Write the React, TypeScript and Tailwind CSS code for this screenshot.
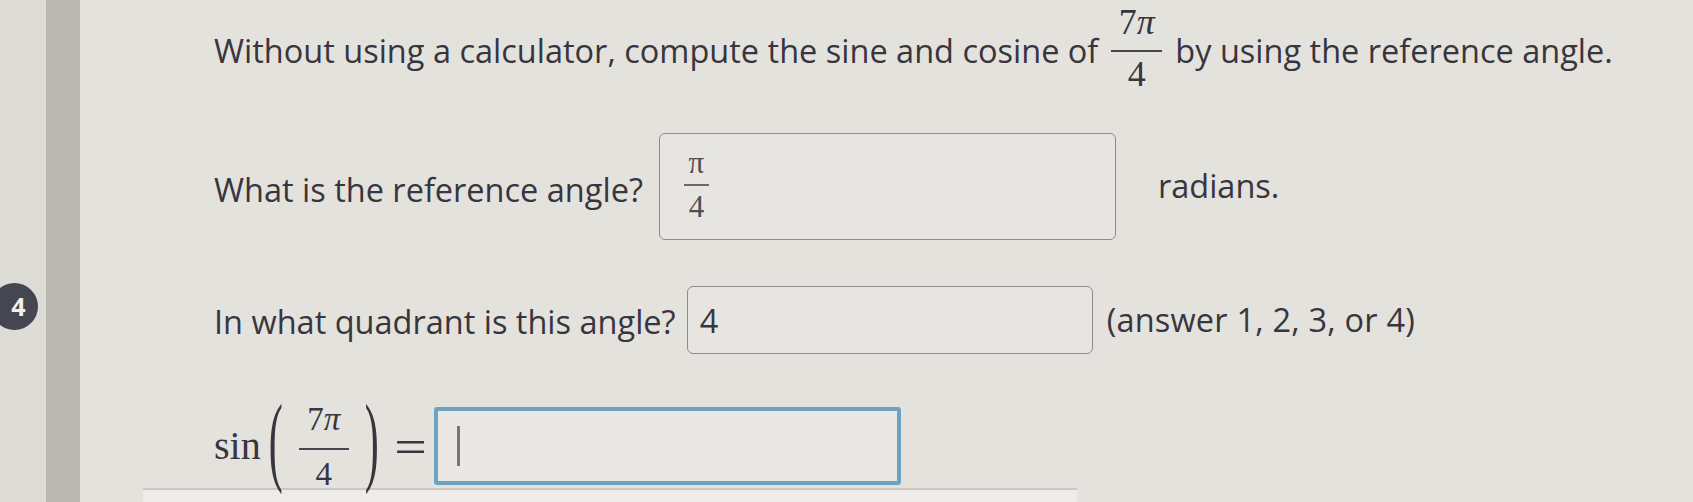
import React from "react";

const sans = "font-['Open_Sans',sans-serif] font-medium";
const serif = "font-['Liberation_Serif',serif]";

function Frac({
  num,
  den,
  className,
  barClass,
  numClass,
  denClass,
}: {
  num: React.ReactNode;
  den: React.ReactNode;
  className?: string;
  barClass?: string;
  numClass?: string;
  denClass?: string;
}) {
  return (
    <span className={`inline-flex flex-col items-center ${serif} ${className ?? ""}`}>
      <span className={`leading-none ${numClass ?? ""}`}>{num}</span>
      <span className={`w-full h-[2px] ${barClass ?? ""}`} />
      <span className={`leading-none ${denClass ?? ""}`}>{den}</span>
    </span>
  );
}

export default function App() {
  return (
    <div className="flex h-[502px] w-[1693px] overflow-hidden bg-[#e4e2dd] text-[#38353e]">
      {/* left gutter with question number */}
      <div className="w-[46px] shrink-0 bg-[#dedcd6]">
        <div className="mt-[283px] -ml-[9px] flex size-[47px] items-center justify-center rounded-full bg-[#45464f] font-['Open_Sans',sans-serif] text-[25px] font-bold text-[#f1f0ec]">
          <span className="ml-[8px]">4</span>
        </div>
      </div>
      <div className="w-[34px] shrink-0 bg-[#bab8b1]" />

      <div className="flex flex-1 flex-col pl-[63px]">
        <div className="flex flex-col pl-[71px]">
          {/* row 1 */}
          <div className={`mt-[13px] flex h-[74px] items-center text-[32.5px] ${sans}`}>
            <span className="mt-[2px]">
              Without using a calculator, compute the sine and cosine of
            </span>
            <Frac
              className="mx-[13px] -mt-[4px] w-[51px] text-[36px] font-normal"
              numClass="mb-[10px]"
              denClass="mt-[4px]"
              barClass="bg-[#4a4750]"
              num={
                <>
                  7<i>π</i>
                </>
              }
              den="4"
            />
            <span className="mt-[2px]">by using the reference angle.</span>
          </div>

          {/* row 2 */}
          <div className={`mt-[46px] flex h-[107px] items-center text-[32.5px] ${sans}`}>
            <span className="mt-[8px]">What is the reference angle?</span>
            <div className="ml-[16px] flex h-full w-[457px] items-center rounded-md border-[1.5px] border-[#8e8c8a] bg-[#e6e5e1] pl-[24px]">
              <Frac
                className="-mt-[4px] w-[25px] text-[31px] font-normal text-[#504d56]"
                numClass="mb-[6px]"
                denClass="mt-[5px]"
                barClass="bg-[#6a6770] h-[1.5px]"
                num="π"
                den="4"
              />
            </div>
            <span className="ml-[42px]">radians.</span>
          </div>

          {/* row 3 */}
          <div className={`mt-[46px] flex h-[68px] items-center text-[32.5px] ${sans}`}>
            <span className="mt-[4px]">In what quadrant is this angle?</span>
            <div className="ml-[11px] flex h-full w-[406px] items-center rounded-md border-[1.5px] border-[#8e8c8a] bg-[#e6e5e1] pl-[12px]">
              <span className="mt-[2px]">4</span>
            </div>
            <span className="ml-[14px] tracking-[0.2px]">(answer 1, 2, 3, or 4)</span>
          </div>

          {/* row 4 */}
          <div className={`mt-[53px] flex h-[78px] items-center ${serif}`}>
            <span className="text-[40px]">sin</span>
            <span className="ml-[8px] -mt-[12px] inline-block origin-center scale-y-[2.35] text-[42px] leading-none">
              (
            </span>
            <Frac
              className="mx-[16px] mt-[2px] w-[50px] text-[33px]"
              numClass="mb-[12px]"
              denClass="mt-[8px]"
              barClass="bg-[#4a4750]"
              num={
                <>
                  7<i>π</i>
                </>
              }
              den="4"
            />
            <span className="-mt-[12px] inline-block origin-center scale-y-[2.35] text-[42px] leading-none">
              )
            </span>
            <span className="ml-[18px] mt-[2px] inline-block scale-x-[1.2] text-[48px] leading-none">=</span>
            <div className="ml-[10px] flex h-full w-[467px] items-center rounded-[3px] border-[4px] border-[#6ca3c3] bg-[#e9e8e4] pl-[19px]">
              <span className="h-[40px] w-[3px] bg-[#7a7478]" />
            </div>
          </div>
        </div>

        {/* next panel peeking in */}
        <div className="mt-[3px] h-[40px] w-[934px] border-t-2 border-[#cac8c2] bg-[#edece9]" />
      </div>
    </div>
  );
}
